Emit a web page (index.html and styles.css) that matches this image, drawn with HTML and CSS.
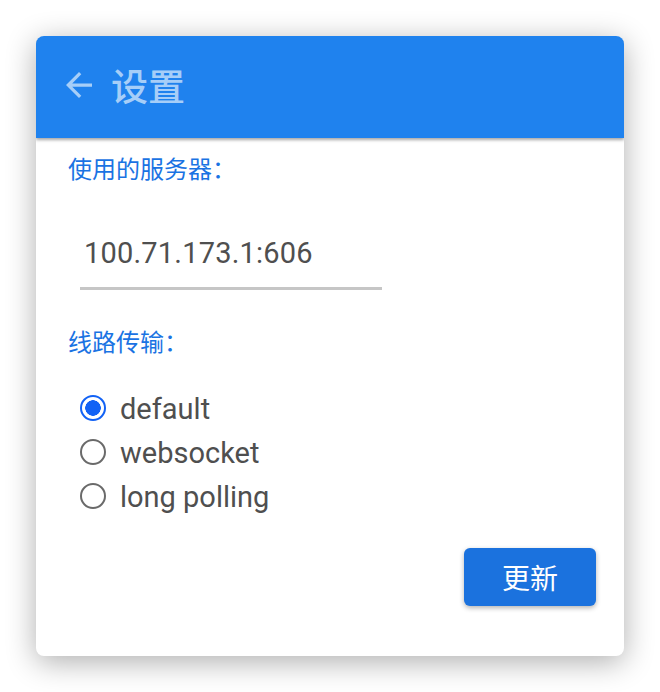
FILE: index.html
```html
<!DOCTYPE html>
<html lang="zh-CN">
<head>
<meta charset="utf-8">
<title>设置</title>
<link rel="stylesheet" href="styles.css">
</head>
<body>
<div class="card">
  <header class="bar">
    <svg class="back" viewBox="4 4 16 16" width="26" height="26" aria-hidden="true">
      <path d="M20 11H7.83l5.59-5.59L12 4l-8 8 8 8 1.41-1.41L7.83 13H20v-2z" fill="currentColor"/>
    </svg>
    <h1 class="title">设置</h1>
  </header>
  <main class="content">
    <div class="label first">使用的服务器：</div>
    <div class="field"><span class="value">100.71.173.1:606</span></div>
    <div class="label second">线路传输：</div>
    <div class="radios">
      <label class="row"><span class="radio checked"></span><span class="opt">default</span></label>
      <label class="row"><span class="radio"></span><span class="opt">websocket</span></label>
      <label class="row"><span class="radio"></span><span class="opt">long polling</span></label>
    </div>
    <div class="actions"><button class="btn">更新</button></div>
  </main>
</div>
</body>
</html>
```
FILE: styles.css
```css
html, body {
  margin: 0;
  background: #ffffff;
}
body {
  padding: 36px;
  font-family: Roboto, "Noto Sans CJK SC", sans-serif;
}
.card {
  width: 588px;
  height: 620px;
  background: #ffffff;
  border-radius: 8px;
  box-shadow: 0 6px 30px rgba(0, 0, 0, 0.32);
  display: flex;
  flex-direction: column;
  overflow: hidden;
}
.bar {
  height: 102px;
  box-sizing: border-box;
  padding: 0 0 5px 30px;
  flex: none;
  background: #1f82ee;
  display: flex;
  align-items: center;
  gap: 19px;
  color: #a6cef8;
  box-shadow: 0 2px 3px rgba(0, 0, 0, 0.35);
  position: relative;
  z-index: 1;
}
.back {
  display: block;
}
.title {
  margin: 0;
  font-family: "Noto Sans CJK SC", sans-serif;
  font-size: 37px;
  font-weight: 500;
  line-height: 40px;
}
.content {
  padding: 0 28px 0 32px;
  display: flex;
  flex-direction: column;
}
.label {
  font-family: "Noto Sans CJK SC", sans-serif;
  font-size: 24px;
  line-height: 30px;
  color: #1a73e3;
}
.label.first {
  margin-top: 15px;
}
.field {
  margin-top: 40px;
  margin-left: 12px;
  width: 302px;
  padding: 10px 4px 14px;
  box-sizing: border-box;
  height: 67px;
  border-bottom: 3px solid #c6c6c6;
  font-size: 29px;
  letter-spacing: 0.2px;
  line-height: 40px;
  color: #4f4f4f;
}
.label.second {
  margin-top: 36px;
}
.radios {
  margin-top: 30px;
  display: flex;
  flex-direction: column;
}
.row {
  height: 44px;
  display: flex;
  align-items: center;
  padding-left: 12px;
  gap: 14px;
}
.radio {
  width: 26px;
  height: 26px;
  box-sizing: border-box;
  border: 2px solid #6a6a6a;
  border-radius: 50%;
  flex: none;
}
.radio.checked {
  border: 2.5px solid #1262f5;
  background: radial-gradient(circle, #1262f5 0 7.5px, #ffffff 8px);
}
.opt {
  font-size: 29px;
  line-height: 36px;
  padding-top: 2px;
  color: #4f4f4f;
}
.actions {
  margin-top: 30px;
  display: flex;
  justify-content: flex-end;
}
.btn {
  width: 132px;
  height: 58px;
  border: none;
  border-radius: 6px;
  background: #1b72de;
  color: #ffffff;
  font-family: "Noto Sans CJK SC", sans-serif;
  font-size: 28px;
  box-shadow: 0 2px 5px rgba(0, 0, 0, 0.3);
}
```
